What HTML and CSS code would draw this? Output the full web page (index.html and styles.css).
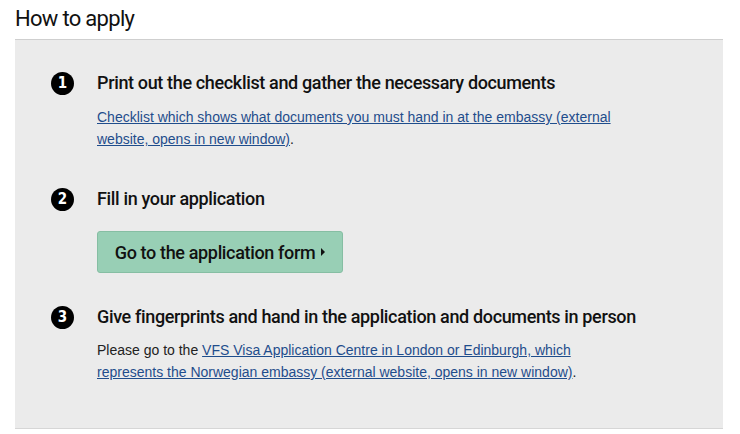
FILE: index.html
```html
<!DOCTYPE html>
<html lang="en">
<head>
<meta charset="utf-8">
<title>How to apply</title>
<link rel="stylesheet" href="styles.css">
</head>
<body>
<h2 class="title">How to apply</h2>
<section class="panel">
  <ol class="steps">
    <li class="step step-1">
      <div class="step-head"><span class="num">1</span><h3>Print out the checklist and gather the necessary documents</h3></div>
      <p class="step-text"><a href="#">Checklist which shows what documents you must hand in at the embassy (external website, opens in new window)</a>.</p>
    </li>
    <li class="step step-2">
      <div class="step-head"><span class="num">2</span><h3>Fill in your application</h3></div>
      <a class="btn" href="#">Go to the application form <span class="arrow"></span></a>
    </li>
    <li class="step step-3">
      <div class="step-head"><span class="num">3</span><h3>Give fingerprints and hand in the application and documents in person</h3></div>
      <p class="step-text">Please go to the <a href="#">VFS Visa Application Centre in London or Edinburgh, which represents the Norwegian embassy (external website, opens in new window)</a>.</p>
    </li>
  </ol>
</section>
</body>
</html>
```

FILE: styles.css
```css
html, body {
  margin: 0;
  padding: 0;
  background: #ffffff;
}
body {
  font-family: "Roboto", "DejaVu Sans Condensed", sans-serif;
  color: #111;
}
.title {
  margin: 0;
  padding: 4px 0 0 15px;
  height: 35px;
  font-size: 22px;
  font-weight: 400;
  letter-spacing: -0.7px;
  line-height: 30px;
  color: #111;
}
.panel {
  margin-left: 15px;
  width: 708px;
  background: #ebebeb;
  border-top: 1px solid #cfcfcf;
  border-bottom: 1px solid #d6d6d6;
  padding: 31px 0 45px 0;
}
.steps {
  list-style: none;
  margin: 0;
  padding: 0 0 0 36px;
  display: flex;
  flex-direction: column;
}
.step-2 {
  margin-top: 37px;
}
.step-3 {
  margin-top: 32px;
}
.step-head {
  display: flex;
  align-items: center;
  gap: 23px;
  height: 24px;
}
.num {
  width: 23px;
  height: 23px;
  border-radius: 50%;
  background: #000;
  color: #fff;
  font-family: "DejaVu Sans Condensed", sans-serif;
  font-weight: 700;
  font-size: 15px;
  display: flex;
  align-items: center;
  justify-content: center;
  flex: none;
}
.step-head h3 {
  margin: 0;
  font-size: 18px;
  font-weight: 500;
  letter-spacing: -0.35px;
  line-height: 24px;
  color: #111;
}
.step-text {
  margin: 11px 0 0 46px;
  font-family: "Liberation Sans", Arial, sans-serif;
  font-size: 14px;
  line-height: 22px;
  color: #222;
  max-width: 530px;
}
.step-3 .step-text {
  margin-top: 10px;
}
.step-text a {
  color: #1f4d8c;
  text-decoration: underline;
}
.btn {
  margin: 20px 0 0 46px;
  display: inline-flex;
  align-items: center;
  justify-content: center;
  gap: 6px;
  width: 244px;
  height: 40px;
  background: #98cfb5;
  border: 1px solid #86bea3;
  border-radius: 3px;
  color: #111;
  text-decoration: none;
  font-size: 18px;
  font-weight: 500;
  letter-spacing: -0.35px;
  align-self: flex-start;
}
.arrow {
  width: 0;
  height: 0;
  border-top: 4px solid transparent;
  border-bottom: 4px solid transparent;
  border-left: 4px solid #111;
}
```
